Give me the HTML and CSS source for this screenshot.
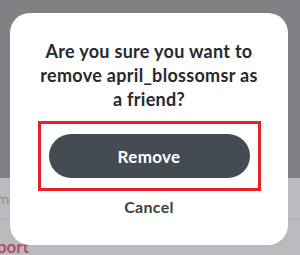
FILE: index.html
```html
<!DOCTYPE html>
<html lang="en">
<head>
    <meta charset="UTF-8">
    <meta name="viewport" content="width=device-width, initial-scale=1.0">
    <title>Remove friend</title>
    <link rel="stylesheet" href="styles.css">
</head>
<body>
    <div class="screen">
        <div class="backdrop-top"></div>
        <div class="backdrop-list">
            <div class="list-row"><span class="row-label">Username</span></div>
            <div class="list-row report"><span class="row-label">Report</span></div>
        </div>

        <div class="dialog">
            <p class="dialog-text">Are you sure you want to remove april_blossomsr as a friend?</p>
            <div class="highlight">
                <button class="remove-btn">Remove</button>
            </div>
            <button class="cancel-btn">Cancel</button>
        </div>
    </div>
</body>
</html>
```

FILE: styles.css
```css
body {
    margin: 0;
    font-family: 'Lato', 'Noto Sans', sans-serif;
    background: #b9babe;
}

.screen {
    position: relative;
    width: 300px;
    height: 255px;
    overflow: hidden;
}

.backdrop-top {
    height: 178px;
    background: #7f8185;
}

.backdrop-list {
    background: #b9babe;
}

/* rows sit behind the dialog, only their edges peek out on the left */
.list-row {
    height: 40px;
    display: flex;
    align-items: center;
    white-space: nowrap;
    color: #8e8f93;
    font-size: 14px;
    border-bottom: 1px solid #aeafb3;
}

.list-row .row-label {
    margin-left: -27px;
}

.list-row.report {
    width: 29px;
    height: 38px;
    justify-content: flex-end;
    align-items: flex-end;
    border-bottom: none;
    color: #b84a5f;
    font-weight: 700;
    font-size: 17px;
}

.list-row.report .row-label {
    margin-left: 0;
}

.dialog {
    position: absolute;
    left: 10px;
    top: 13px;
    width: 278px;
    height: 232px;
    box-sizing: border-box;
    background: #fff;
    border-radius: 20px;
    padding-top: 26px;
    display: flex;
    flex-direction: column;
    align-items: center;
}

.dialog-text {
    margin: 0;
    width: 218px;
    text-align: center;
    font-size: 18px;
    font-weight: 700;
    letter-spacing: 0.3px;
    line-height: 24px;
    color: #26292d;
}

.highlight {
    margin-top: 10px;
    width: 223px;
    height: 70px;
    box-sizing: border-box;
    border: 3px solid #e8202a;
    display: flex;
    align-items: center;
    justify-content: center;
}

.remove-btn {
    width: 201px;
    height: 44px;
    border: none;
    border-radius: 22px;
    background: #454b53;
    color: #fff;
    font-family: inherit;
    font-size: 17px;
    font-weight: 700;
    letter-spacing: 0.3px;
    padding: 0;
}

.cancel-btn {
    margin-top: 6px;
    border: none;
    background: none;
    padding: 0;
    font-family: inherit;
    font-size: 16px;
    font-weight: 700;
    letter-spacing: 0.3px;
    color: #3c4046;
    line-height: 20px;
}
```
